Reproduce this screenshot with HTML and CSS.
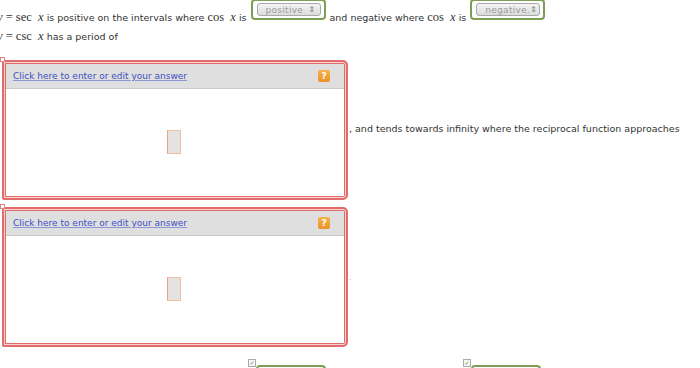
FILE: index.html
```html
<!DOCTYPE html>
<html lang="en">
<head>
  <meta charset="UTF-8">
  <title>Reciprocal functions</title>
  <link rel="stylesheet" href="styles.css">
</head>
<body>
  <div class="page">
    <div class="row row-first">
      <span class="txt"><span class="math"><i>y</i> = sec&nbsp;&nbsp;<i>x</i></span> is positive on the intervals where <span class="math">cos&nbsp;&nbsp;<i>x</i></span> is</span>
      <span class="pick">
        <span class="sel">positive <span class="arr">&#8661;</span></span>
      </span>
      <span class="txt">and negative where <span class="math">cos&nbsp;&nbsp;<i>x</i></span> is</span>
      <span class="pick pick-neg">
        <span class="sel">negative. <span class="arr">&#8661;</span></span>
      </span>
    </div>

    <div class="row row-second">
      <span class="txt"><span class="math"><i>y</i> = csc&nbsp;&nbsp;<i>x</i></span> has a period of</span>
    </div>

    <div class="answer-row">
      <span class="marker"></span>
      <div class="answer">
        <div class="answer-head">
          <a href="#" class="answer-link">Click here to enter or edit your answer</a>
          <span class="help">?</span>
        </div>
        <div class="answer-body">
          <span class="caret-box"></span>
        </div>
      </div>
      <span class="after">, and tends towards infinity where the reciprocal function approaches</span>
    </div>

    <div class="answer-row">
      <span class="marker"></span>
      <div class="answer">
        <div class="answer-head">
          <a href="#" class="answer-link">Click here to enter or edit your answer</a>
          <span class="help">?</span>
        </div>
        <div class="answer-body">
          <span class="caret-box"></span>
        </div>
      </div>
      <span class="after after-dot">.</span>
    </div>

    <div class="row row-last">
      <span class="check">&#10003;</span>
      <span class="pick-top"></span>
      <span class="check check-2">&#10003;</span>
      <span class="pick-top"></span>
    </div>
  </div>
</body>
</html>
```

FILE: styles.css
```css
/* page */
body {
  margin: 0;
  background: #fff;
  font-family: "DejaVu Sans", Verdana, sans-serif;
  font-size: 9.5px;
  color: #333;
  overflow: hidden;
}

.page {
  width: 700px;
  height: 368px;
  overflow: hidden;
}

.row {
  display: flex;
  align-items: flex-start;
  white-space: nowrap;
}

.row-first {
  height: 25px;
  margin-left: -3px;
}

.row-second {
  height: 32px;
  margin-left: -3px;
}

.txt {
  line-height: 12px;
}

.row-first .txt {
  padding-top: 11px;
}

.row-second .txt {
  padding-top: 5px;
}

.math {
  font-family: "Liberation Serif", "Times New Roman", serif;
  font-size: 12.5px;
  color: #333;
}

/* dropdowns */
.pick {
  display: flex;
  box-sizing: border-box;
  height: 21px;
  margin: -1px 4px 0 4px;
  padding: 2px 3px 3px 4px;
  border: 2px solid #7f9e55;
  border-radius: 4px;
}

.sel {
  display: flex;
  align-items: center;
  justify-content: space-between;
  box-sizing: border-box;
  width: 64px;
  height: 13px;
  padding: 0 4px 0 8px;
  border: 1px solid #a9a9a9;
  border-radius: 3px;
  background: linear-gradient(#f4f4f4, #dcdcdc);
  color: #9a9a9a;
  font-size: 9px;
  letter-spacing: 0.3px;
}

.arr {
  font-size: 8px;
  color: #777;
}

/* answer boxes */
.answer-row {
  display: flex;
  align-items: center;
  height: 147px;
  position: relative;
}

.marker {
  position: absolute;
  left: 0;
  top: 0;
  width: 3px;
  height: 3px;
  border: 1px solid #d88;
  background: #fff;
}

.answer {
  box-sizing: border-box;
  width: 346px;
  height: 140px;
  margin: 3px 0 0 2px;
  align-self: flex-start;
  border: 2px solid #e36b6b;
  border-radius: 2px 5px 5px 2px;
  box-shadow: inset 0 0 0 1px #f7d0d0, inset 0 0 0 2px #e36b6b;
  padding: 2px;
  display: flex;
  flex-direction: column;
}

.answer-head {
  display: flex;
  align-items: center;
  justify-content: space-between;
  height: 24px;
  padding: 0 14px 0 7px;
  background: #dfdfdf;
  border-bottom: 1px solid #c9c9c9;
}

.answer-link {
  color: #3d4fc4;
  font-size: 9px;
  text-decoration: underline;
  text-decoration-color: #8b95d8;
}

.help {
  display: flex;
  align-items: center;
  justify-content: center;
  width: 12px;
  height: 12px;
  border-radius: 2px;
  background: linear-gradient(#f6b44e, #e99227);
  color: #fff;
  font-size: 9px;
  font-weight: bold;
}

.answer-body {
  flex: 1;
  display: flex;
  align-items: center;
  justify-content: center;
  background: #fff;
  padding-bottom: 2px;
}

.caret-box {
  box-sizing: border-box;
  width: 14px;
  height: 24px;
  margin-left: -2px;
  background: #e3e3e3;
  border: 1px solid #f1bf9e;
  border-left-color: #eea27a;
}

.after {
  margin: -5px 0 0 1px;
  white-space: nowrap;
}

.after-dot {
  color: #999;
  margin-top: 0;
  font-size: 7px;
}

/* bottom strip */
.row-last {
  padding-top: 8px;
}

.check {
  box-sizing: border-box;
  width: 8px;
  height: 8px;
  margin-left: 248px;
  border: 1px solid #aaa;
  background: #f5f5f5;
  color: #6a9a3a;
  font-size: 6px;
  line-height: 6px;
  text-align: center;
}

.check-2 {
  margin-left: 137px;
}

.pick-top {
  box-sizing: border-box;
  width: 70px;
  height: 8px;
  margin-top: 6px;
  border: 2px solid #7f9e55;
  border-bottom: none;
  border-radius: 4px 4px 0 0;
}
```
